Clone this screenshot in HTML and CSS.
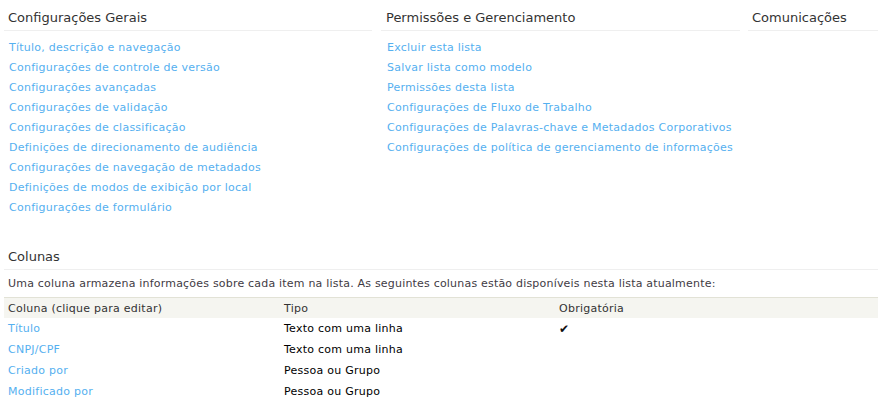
FILE: index.html
```html
<!DOCTYPE html>
<html lang="pt-BR">
<head>
<meta charset="utf-8">
<title>Configurações da lista</title>
<link rel="stylesheet" href="styles.css">
</head>
<body>
<div class="sections">
  <div class="section s1">
    <h3 class="sec-title">Configurações Gerais</h3>
    <ul class="links">
      <li><a href="#">Título, descrição e navegação</a></li>
      <li><a href="#">Configurações de controle de versão</a></li>
      <li><a href="#">Configurações avançadas</a></li>
      <li><a href="#">Configurações de validação</a></li>
      <li><a href="#">Configurações de classificação</a></li>
      <li><a href="#">Definições de direcionamento de audiência</a></li>
      <li><a href="#">Configurações de navegação de metadados</a></li>
      <li><a href="#">Definições de modos de exibição por local</a></li>
      <li><a href="#">Configurações de formulário</a></li>
    </ul>
  </div>
  <div class="section s2">
    <h3 class="sec-title">Permissões e Gerenciamento</h3>
    <ul class="links">
      <li><a href="#">Excluir esta lista</a></li>
      <li><a href="#">Salvar lista como modelo</a></li>
      <li><a href="#">Permissões desta lista</a></li>
      <li><a href="#">Configurações de Fluxo de Trabalho</a></li>
      <li><a href="#">Configurações de Palavras-chave e Metadados Corporativos</a></li>
      <li><a href="#">Configurações de política de gerenciamento de informações</a></li>
    </ul>
  </div>
  <div class="section s3">
    <h3 class="sec-title">Comunicações</h3>
  </div>
</div>

<div class="columns-block">
  <h3 class="sec-title wide">Colunas</h3>
  <p class="desc">Uma coluna armazena informações sobre cada item na lista. As seguintes colunas estão disponíveis nesta lista atualmente:</p>
  <table class="cols">
    <thead>
      <tr><th class="c1">Coluna (clique para editar)</th><th class="c2">Tipo</th><th class="c3">Obrigatória</th></tr>
    </thead>
    <tbody>
      <tr><td><a href="#">Título</a></td><td>Texto com uma linha</td><td><span class="check">&#10004;</span></td></tr>
      <tr><td><a href="#">CNPJ/CPF</a></td><td>Texto com uma linha</td><td></td></tr>
      <tr><td><a href="#">Criado por</a></td><td>Pessoa ou Grupo</td><td></td></tr>
      <tr><td><a href="#">Modificado por</a></td><td>Pessoa ou Grupo</td><td></td></tr>
    </tbody>
  </table>
</div>
</body>
</html>
```

FILE: styles.css
```css
html, body {
  margin: 0;
  padding: 0;
  background: #fff;
}
body {
  font-family: "DejaVu Sans", Verdana, sans-serif;
  font-size: 11px;
  letter-spacing: 0.25px;
  color: #000;
  width: 878px;
  overflow: hidden;
}
a {
  color: #55b0f0;
  text-decoration: none;
}
.sections {
  display: flex;
  padding-left: 4px;
  gap: 9px;
}
.s1 { width: 368px; }
.s2 { width: 359px; }
.s3 { flex: 1; margin-left: -1px; }

.sec-title {
  margin: 0;
  font-family: "DejaVu Sans", Verdana, sans-serif;
  font-weight: normal;
  font-size: 13px;
  letter-spacing: 0;
  color: #333;
  height: 20px;
  padding: 10px 0 0 4px;
  border-bottom: 1px solid #efefef;
}
.s2 .sec-title { padding-left: 5px; }

.links {
  list-style: none;
  margin: 0;
  padding: 7px 0 0 5px;
}
.links li {
  height: 20px;
  line-height: 20px;
  white-space: nowrap;
}
.s2 .links { padding-left: 6px; }

.columns-block {
  padding: 27px 0 0 4px;
}
.columns-block .sec-title {
  height: 20px;
  padding-top: 4px;
}
.desc {
  margin: 0;
  padding: 6px 0 0 4px;
  height: 21px;
  line-height: 15px;
  letter-spacing: 0.2px;
  color: #3f3b44;
}
.cols {
  width: 874px;
  border-collapse: collapse;
}
.cols thead tr {
  background: #f5f5f0;
  border-top: 1px solid #e2e2d6;
}
.cols th {
  font-weight: normal;
  text-align: left;
  color: #333;
  height: 20px;
  padding: 0 0 0 4px;
}
.cols th.c1 { width: 272px; }
.cols th.c2 { width: 271px; }
.cols td {
  height: 21px;
  padding: 0 0 0 4px;
  white-space: nowrap;
}
.check {
  font-size: 12px;
  color: #111;
}
```
